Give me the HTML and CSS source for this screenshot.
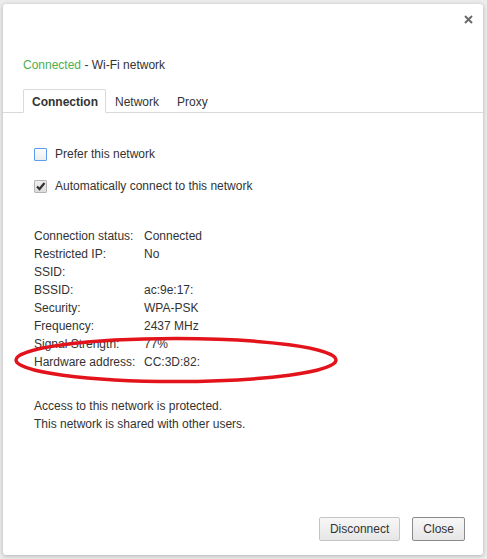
FILE: index.html
```html
<!DOCTYPE html>
<html>
<head>
<meta charset="utf-8">
<link rel="stylesheet" href="styles.css">
</head>
<body>
<div class="dialog">
  <div class="topbar">
    <svg class="close" width="9" height="9" viewBox="0 0 9 9"><path d="M1 1 L8 8 M8 1 L1 8" stroke="#6b6b6b" stroke-width="2"/></svg>
  </div>
  <div class="title"><span class="ok">Connected</span> - Wi-Fi network</div>
  <div class="tabs">
    <div class="tab active">Connection</div>
    <div class="tab">Network</div>
    <div class="tab">Proxy</div>
  </div>
  <div class="content">
    <label class="check"><span class="box"></span>Prefer this network</label>
    <label class="check"><span class="box checked"><svg width="11" height="11" viewBox="0 0 11 11"><path d="M2 5.5 L4.5 8 L9.5 2" fill="none" stroke="#333" stroke-width="2.2"/></svg></span>Automatically connect to this network</label>
    <div class="info">
      <div class="k">Connection status:</div><div class="v">Connected</div>
      <div class="k">Restricted IP:</div><div class="v">No</div>
      <div class="k">SSID:</div><div class="v"></div>
      <div class="k">BSSID:</div><div class="v">ac:9e:17:</div>
      <div class="k">Security:</div><div class="v">WPA-PSK</div>
      <div class="k">Frequency:</div><div class="v">2437 MHz</div>
      <div class="k">Signal Strength:</div><div class="v">77%</div>
      <div class="k hw">Hardware address:<svg class="ellipse" width="328" height="50" viewBox="0 0 328 50"><ellipse cx="164" cy="25" rx="160" ry="21.5" fill="none" stroke="#e3131b" stroke-width="3.5"/></svg></div><div class="v">CC:3D:82:</div>
    </div>
    <div class="notes">
      <div>Access to this network is protected.</div>
      <div>This network is shared with other users.</div>
    </div>
  </div>
  <div class="buttons">
    <button class="btn">Disconnect</button>
    <button class="btn focus">Close</button>
  </div>
</div>
</body>
</html>
```
FILE: styles.css
```css
html, body { margin: 0; padding: 0; }
body {
  background: #ececec;
  width: 487px;
  height: 559px;
  overflow: hidden;
  font-family: "Liberation Sans", Arial, sans-serif;
  font-size: 12px;
  color: #333;
}
.dialog {
  margin: 4px 0 0 3px;
  width: 480px;
  height: 551px;
  background: #fff;
  border-radius: 3px;
  box-shadow: 0 1px 4px rgba(0,0,0,0.25);
  display: flex;
  flex-direction: column;
}
.topbar {
  height: 54px;
  display: flex;
  justify-content: flex-end;
  padding: 11px 10px 0 0;
  box-sizing: border-box;
}
.close { display: block; }
.title {
  padding-left: 20px;
  line-height: 14px;
  height: 14px;
  color: #333;
}
.ok { color: #4caf50; }
.tabs {
  margin-top: 17px;
  height: 23px;
  display: flex;
  padding-left: 20px;
  border-bottom: 1px solid #d9d9d9;
}
.tab {
  padding: 3px 9px 0;
  line-height: 20px;
  height: 23px;
  box-sizing: border-box;
}
.tab.active {
  border: 1px solid #d9d9d9;
  border-bottom: 1px solid #fff;
  border-radius: 2px 2px 0 0;
  height: 24px;
  padding: 2px 7px 0 8px;
  font-weight: bold;
  margin-bottom: -1px;
  background: #fff;
}
.content {
  padding: 34px 0 0 31px;
  flex: 1;
}
.check {
  display: flex;
  align-items: center;
  height: 14px;
  margin-bottom: 18px;
}
.box {
  width: 11px;
  height: 11px;
  border: 1px solid #5b9cf0;
  border-radius: 1px;
  background: linear-gradient(#fdfdfd, #ededed);
  margin-right: 8px;
  position: relative;
}
.box.checked {
  border-color: #b5b5b5;
  background: linear-gradient(#f0f0f0, #dcdcdc);
}
.box svg { position: absolute; left: 0; top: 0; }
.info {
  margin-top: 34px;
  display: grid;
  grid-template-columns: 110px auto;
  grid-auto-rows: 18px;
  line-height: 18px;
}
.hw { position: relative; }
.ellipse {
  position: absolute;
  left: -22px;
  top: -18px;
}
.notes {
  margin-top: 26px;
  line-height: 18px;
}
.buttons {
  display: flex;
  justify-content: flex-end;
  gap: 12px;
  padding: 0 18px 14px 0;
}
.btn {
  font-family: "Liberation Sans", Arial, sans-serif;
  font-size: 12px;
  color: #333;
  height: 24px;
  padding: 0 10px;
  border: 1px solid #c4c4c4;
  border-radius: 2px;
  background: linear-gradient(#f7f7f7, #e6e6e6);
}
.btn.focus { border-color: #8a8a8a; }
```
